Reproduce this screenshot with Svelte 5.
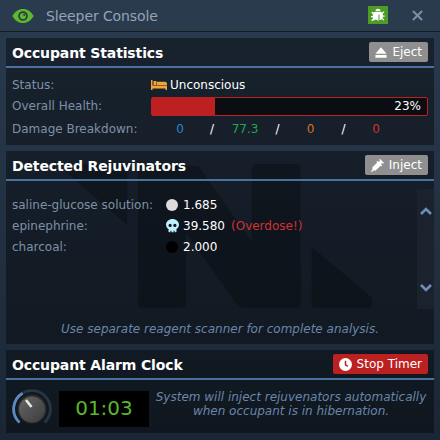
<script>
  const damage = [
    { v: '0', c: 'blue' }, { v: '/', c: 'slash' },
    { v: '77.3', c: 'green' }, { v: '/', c: 'slash' },
    { v: '0', c: 'orange' }, { v: '/', c: 'slash' },
    { v: '0', c: 'red' }
  ];
</script>

<div class="window">
  <header class="titlebar">
    <svg class="eye" viewBox="0 0 22 14" width="22" height="14" aria-hidden="true">
      <path fill="#5eb82c" fill-rule="evenodd" d="M0.3 7C3 2.6 6.7 0 11 0s8 2.6 10.700 7C19 11.400 15.300 14 11 14S3 11.400 0.3 7ZM11 2.200A4.800 4.800 0 1 0 11 11.800A4.800 4.800 0 1 0 11 2.200Z"/>
      <circle cx="11" cy="7" r="3.100" fill="#5eb82c"/>
      <circle cx="12.200" cy="5.800" r="1.100" fill="#2a3a4d"/>
    </svg>
    <span class="wintitle">Sleeper Console</span>
    <span class="bug">
      <svg viewBox="0 0 14 14" width="14" height="14" aria-hidden="true">
        <path fill="#fff" d="M4.400 3.200C4.600 1.600 5.700 .8 7 .8s2.400.8 2.600 2.400ZM3.600 4h6.800c.4 0 .7.2.9.5l1.300-1.200.8.8-1.600 1.500v2h1.800v1.100h-1.800c0 .5-.1 1-.3 1.400l1.800 1.700-.8.8-1.600-1.500c-.7.7-1.500 1.100-2.400 1.200V6.500h-1V12.800c-.9-.1-1.700-.5-2.400-1.200L1 13.100l-.8-.8L2 10.600c-.2-.4-.3-.9-.3-1.400H0V8.100h1.800v-2L.2 4.600 1 3.800 2.700 4.500c.2-.3.5-.5.9-.5Z"/>
      </svg>
    </span>
    <svg class="close" viewBox="0 0 12 12" width="11" height="11" aria-hidden="true">
      <path stroke="#7f8fa3" stroke-width="2.200" d="M1 1 11 11M11 1 1 11"/>
    </svg>
  </header>

  <main class="content">
    <section class="section stats">
      <div class="sec-head">
        <h2>Occupant Statistics</h2>
        <span class="btn gray">
          <svg viewBox="0 0 14 12" width="12" height="11" aria-hidden="true"><path fill="#fff" d="M7 0 13.500 7.500H.5ZM.5 9h13v3H.5Z"/></svg>
          Eject
        </span>
      </div>
      <div class="rows">
        <div class="row r1">
          <span class="label">Status:</span>
          <span class="val">
            <svg viewBox="0 0 16 10" width="16" height="10" aria-hidden="true">
              <path fill="#f2a33a" d="M0 0h1.500v5.500H16V10h-1.500V8.500h-13V10H0ZM2.500 1H5.500V5H2.500ZM6 1.800H14c1.200 0 2 .8 2 2V5H6Z"/>
            </svg>
            <span>Unconscious</span>
          </span>
        </div>
        <div class="row r2">
          <span class="label">Overall Health:</span>
          <div class="bar"><div class="fill" style="width: 23%"></div><span class="pct">23%</span></div>
        </div>
        <div class="row r3">
          <span class="label">Damage Breakdown:</span>
          <div class="dmg">
            {#each damage as d}<span class={d.c}>{d.v}</span>{/each}
          </div>
        </div>
      </div>
    </section>

    <section class="section rejuv">
      <svg class="watermark" viewBox="0 0 425 200" width="306" height="144" aria-hidden="true">
        <path d="M184 3 106.800 0A6.800 6 0 0 0 100 6V194A6.800 6 0 0 0 106.800 200H160A6.800 6 0 0 0 166.700 194V96L239 197A6.800 6 0 0 0 245 200H319A6.800 6 0 0 0 326 194V6A6.800 6 0 0 0 319 0H265A6.800 6 0 0 0 258 6V108L184 3ZM0 8A6 6 0 0 1 6 0H85V85L0 11ZM341 115 V194A6 6 0 0 0 347 200H419A6 6 0 0 0 425 194V189A8 8 0 0 0 422 183Z"/>
      </svg>
      <div class="sec-head">
        <h2>Detected Rejuvinators</h2>
        <span class="btn gray">
          <svg viewBox="0 0 14 14" width="13" height="13" aria-hidden="true">
            <path fill="#fff" d="M9.800 0 14 4.200 13 5.200 12 4.200 10.700 5.500 12 7 11 8 10.300 7.300 5 12.500H2.600L.8 14 0 13.200 1.500 11.400V9L6.700 3.700 6 3 7 2 8.500 3.300 9.800 2 8.800 1Z"/>
          </svg>
          Inject
        </span>
      </div>
      <div class="rej-body">
        <div class="list">
          <div class="reagent">
            <span class="label">saline-glucose solution:</span>
            <span class="ico"><span class="dot light"></span></span>
            <span class="amt">1.685</span>
          </div>
          <div class="reagent">
            <span class="label">epinephrine:</span>
            <span class="ico">
              <svg viewBox="0 0 12 13" width="13" height="14" aria-hidden="true">
                <path fill="#bfeeff" fill-rule="evenodd" d="M6 0C2.700 0 0 2.300 0 5.300 0 7.100 1 8.600 2.500 9.500L2.200 11c-.1.700.3 1.300 1 1.300H4V11h1v1.300h2V11h1v1.300h.8c.7 0 1.100-.6 1-1.300l-.3-1.500C11 8.600 12 7.100 12 5.300 12 2.300 9.300 0 6 0ZM3.800 4.500a1.500 1.500 0 1 1 0 3 1.500 1.500 0 0 1 0-3ZM8.200 4.500a1.500 1.500 0 1 1 0 3 1.500 1.500 0 0 1 0-3Z"/>
              </svg>
            </span>
            <span class="amt">39.580</span>
            <span class="od">(Overdose!)</span>
          </div>
          <div class="reagent">
            <span class="label">charcoal:</span>
            <span class="ico"><span class="dot black"></span></span>
            <span class="amt">2.000</span>
          </div>
        </div>
        <div class="scroll">
          <svg viewBox="0 0 12 8" width="12" height="8" aria-hidden="true"><path fill="none" stroke="#6f8db5" stroke-width="2.600" d="M1 7 6 2 11 7"/></svg>
          <svg viewBox="0 0 12 8" width="12" height="8" aria-hidden="true"><path fill="none" stroke="#6f8db5" stroke-width="2.600" d="M1 1 6 6 11 1"/></svg>
        </div>
      </div>
      <p class="note">Use separate reagent scanner for complete analysis.</p>
    </section>

    <section class="section alarm">
      <div class="sec-head">
        <h2>Occupant Alarm Clock</h2>
        <span class="btn redbtn">
          <svg viewBox="0 0 14 14" width="13" height="13" aria-hidden="true">
            <circle cx="7" cy="7" r="7" fill="#fff"/>
            <path fill="none" stroke="#bd2020" stroke-width="1.600" d="M7 3V7.300L9.500 9"/>
          </svg>
          Stop Timer
        </span>
      </div>
      <div class="alarm-body">
        <svg class="knob" viewBox="0 0 40 40" width="40" height="40" aria-hidden="true">
          <defs>
            <linearGradient id="kn" x1="0" y1="0" x2="1" y2="1">
              <stop offset="0" stop-color="#666"/><stop offset="1" stop-color="#3c3c3c"/>
            </linearGradient>
          </defs>
          <path d="M7.500 33.500A18.400 18.400 0 1 1 32.500 33.500" fill="none" stroke="#2a3544" stroke-width="2.800"/>
          <path d="M7.500 33.500A18.400 18.400 0 0 1 10.500 4.300" fill="none" stroke="#5a8ac2" stroke-width="2.800"/>
          <circle cx="20" cy="20" r="14.500" fill="#2b2b2b"/>
          <circle cx="20" cy="20.500" r="13" fill="url(#kn)"/>
          <path d="M14 11 19.500 18" stroke="#e8e8e8" stroke-width="2.600"/>
        </svg>
        <div class="lcd">01:03</div>
        <p class="hint">System will inject rejuvenators automatically<br />when occupant is in hibernation.</p>
      </div>
    </section>
  </main>
</div>

<style>
  :global(body) { margin: 0; background: #1c2836; }
  .window {
    width: 440px; height: 440px; overflow: hidden;
    display: flex; flex-direction: column;
    background: linear-gradient(#2a3b4f, #1a2634);
    font: 12px/14px "DejaVu Sans", Verdana, sans-serif;
    color: #fff;
  }
  .titlebar {
    flex: none; height: 31px; box-sizing: content-box;
    display: flex; align-items: center;
    padding: 0 0 0 12px;
    background: #2a3b4e;
    border-bottom: 1px solid #161b22;
  }
  .eye { margin-right: 12px; }
  .wintitle { font-size: 14px; color: #94a3b6; letter-spacing: -0.1px; }
  .bug {
    margin-left: auto; width: 20px; height: 18px; background: #4f9b28;
    display: flex; align-items: center; justify-content: center;
    margin-right: 24px; margin-bottom: 1px;
  }
  .close { margin-right: 17px; margin-bottom: 1px; }

  .content {
    flex: 1; min-height: 0;
    display: flex; flex-direction: column; gap: 6px;
    padding: 6px 6px 7px;
  }
  .section { background: rgba(0, 0, 0, 0.4); position: relative; overflow: hidden; }
  .stats { height: 107px; flex: none; }
  .rejuv { flex: 1; display: flex; flex-direction: column; }
  .alarm { height: 83px; flex: none; }

  .sec-head {
    height: 28px; display: flex; align-items: center; justify-content: space-between;
    padding: 0 6px; border-bottom: 2px solid #4972a1;
    position: relative;
  }
  h2 {
    margin: 2px 0 0; font-size: 14px; line-height: 16px; font-weight: bold; color: #fff;
    letter-spacing: -0.13px;
  }

  .btn {
    height: 20px; display: inline-flex; align-items: center; gap: 5px;
    padding: 0 6px; border-radius: 2px; color: #fff; white-space: nowrap;
  }
  .gray { background: #8f8f8f; }
  .redbtn { background: #bd2020; }

  .rows { padding: 0 6px; position: relative; }
  .row { display: flex; align-items: center; }
  .r1 { height: 20px; margin-top: 7px; }
  .r2 { height: 20px; margin-top: 1px; }
  .r3 { height: 20px; margin-top: 3px; }
  .label { color: #7f90a6; }
  .row .label { width: 139px; flex: none; }
  .val { display: inline-flex; align-items: center; gap: 3px; }

  .bar {
    flex: 1; height: 17px; position: relative;
    border: 1px solid #bd2020; border-radius: 2px; background: #0a0d11;
  }
  .fill { height: 100%; background: #bd2020; }
  .pct { position: absolute; right: 6px; top: 1px; }

  .dmg {
    flex: 1; display: grid; padding-left: 13px;
    grid-template-columns: 32px 32px 34px 31px 35px 31px 34px;
    text-align: center;
  }
  .blue { color: #2f86d0; }
  .green { color: #20a84a; }
  .orange { color: #d6702a; }
  .red { color: #d33131; }
  .slash { color: #fff; }

  .watermark {
    position: absolute; left: 60px; top: 13px; fill: #000; opacity: 0.25;
  }

  .rej-body { flex: 1; display: flex; position: relative; margin-top: 8px; }
  .list { flex: 1; padding: 5px 6px 0; }
  .reagent { height: 21px; display: flex; align-items: center; }
  .reagent .label { width: 154px; flex: none; }
  .ico { width: 17px; flex: none; display: flex; align-items: center; }
  .dot { width: 12px; height: 12px; border-radius: 50%; display: block; }
  .light { background: #dcdcdc; }
  .black { background: #000; }
  .od { color: #d33131; margin-left: 6px; }
  .scroll {
    width: 17px; background: #1a222e;
    display: flex; flex-direction: column; align-items: center; justify-content: space-between;
    padding: 18px 0 17px; box-sizing: border-box; height: 120px;
  }
  .note {
    margin: 0; height: 35px; padding-top: 13px; box-sizing: border-box; text-align: center;
    font-style: italic; color: #6a86aa; position: relative;
  }

  .alarm-body { display: flex; align-items: center; padding: 8px 6px 0; position: relative; }
  .knob { flex: none; margin-right: 7px; margin-top: 1px; }
  .lcd {
    width: 90px; height: 36px; flex: none; background: #000; color: #5bb82a;
    display: flex; align-items: center; justify-content: center;
    font-size: 20px; padding-bottom: 2px; box-sizing: border-box;
  }
  .hint {
    margin: 0; flex: 1; align-self: flex-start; text-align: center; font-style: italic; color: #6a86aa;
    line-height: 14px; padding-left: 5px; padding-top: 2px; white-space: nowrap;
  }
</style>
